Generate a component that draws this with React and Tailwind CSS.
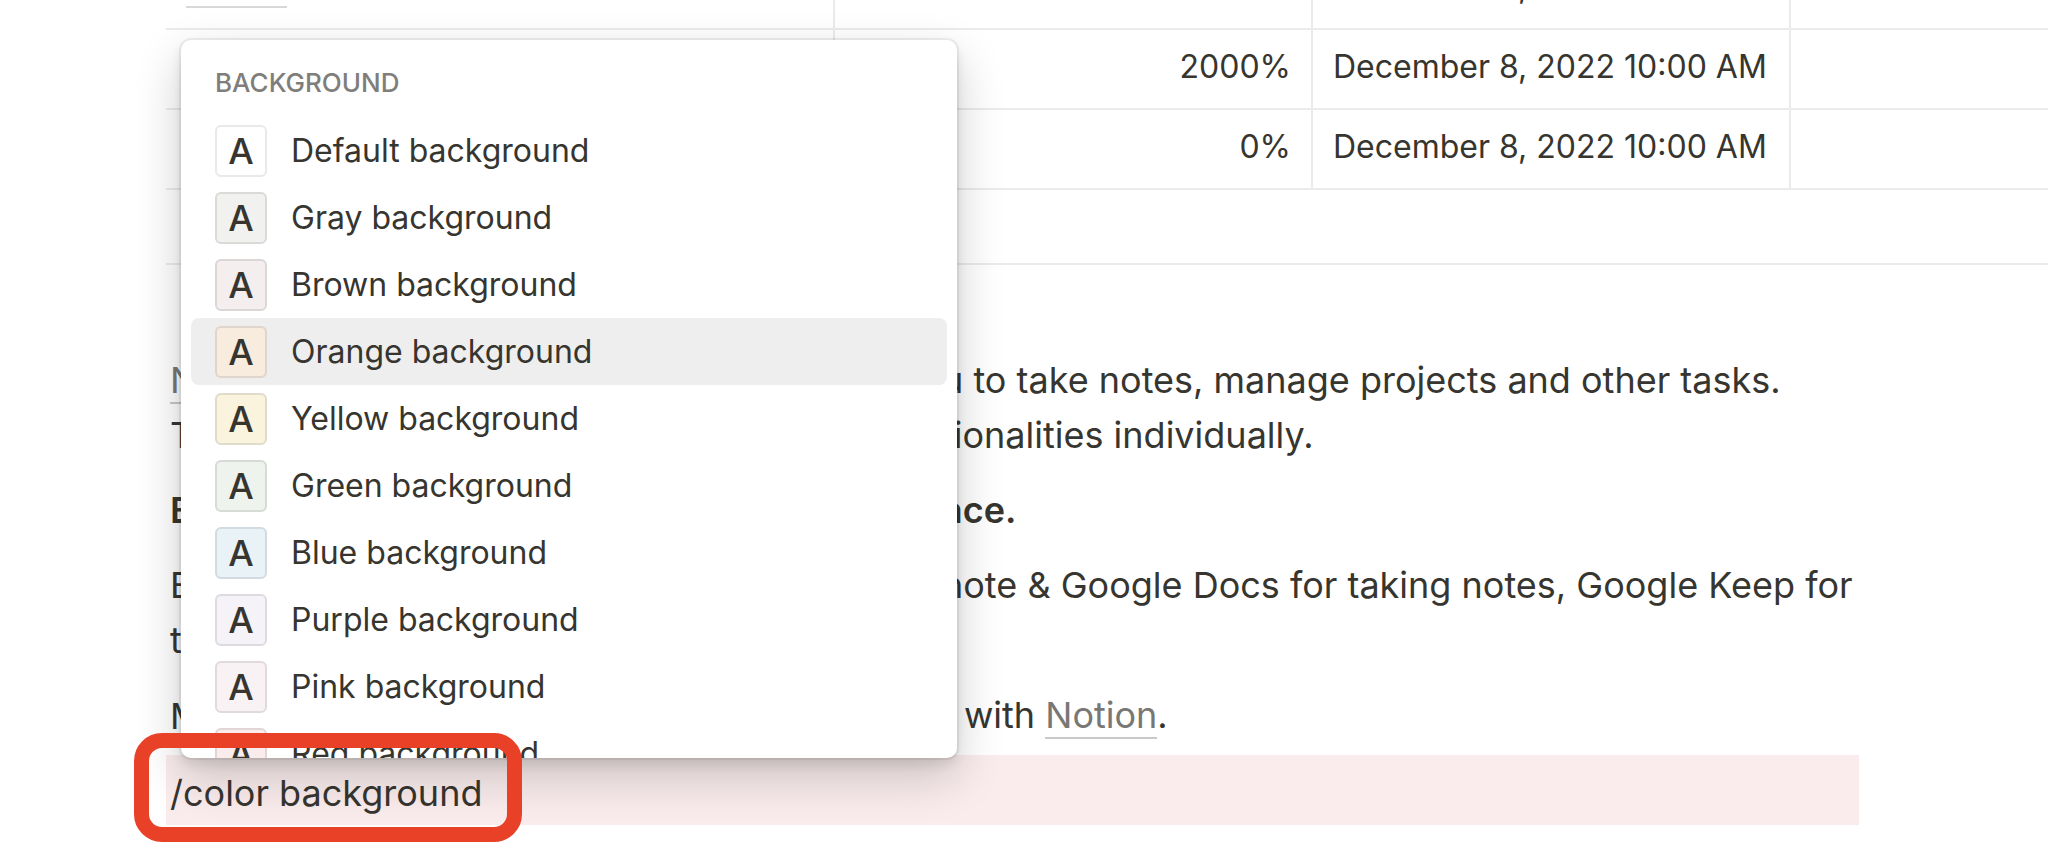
import React from 'react';

const colors = [
  { name: 'Default', swatch: 'bg-white border-[#e9e9e9]' },
  { name: 'Gray', swatch: 'bg-[#f1f1ef] border-[#dadad8]' },
  { name: 'Brown', swatch: 'bg-[#f4eeee] border-[#dcd7d7]' },
  { name: 'Orange', swatch: 'bg-[#f8ecdf] border-[#dfd5cc]', active: true },
  { name: 'Yellow', swatch: 'bg-[#faf3dd] border-[#e1dbc9]' },
  { name: 'Green', swatch: 'bg-[#eef3ed] border-[#d7dbd6]' },
  { name: 'Blue', swatch: 'bg-[#e9f3f7] border-[#d2dbdf]' },
  { name: 'Purple', swatch: 'bg-[#f6f3f8] border-[#dedbe0]' },
  { name: 'Pink', swatch: 'bg-[#f9f2f5] border-[#e0dadd]' },
  { name: 'Red', swatch: 'bg-[#faecec] border-[#e1d5d5]' },
];

const rows = [
  { id: 1, page: 'Notion', progress: '5000%', date: 'December 8, 2022 10:00 AM' },
  { id: 2, page: '', progress: '2000%', date: 'December 8, 2022 10:00 AM' },
  { id: 3, page: '', progress: '0%', date: 'December 8, 2022 10:00 AM' },
];

const DatabaseTable = () => (
  <div className="-mt-[51px] h-[316px] border-b-2 border-[#ebebea]">
    <table className="w-full table-fixed border-collapse text-[32px] leading-[48px]">
      <colgroup>
        <col className="w-[668px]" />
        <col className="w-[478px]" />
        <col className="w-[478px]" />
        <col />
      </colgroup>
      <tbody>
        {rows.map((row) => (
          <tr key={row.id} className="h-[80px] border-b-2 border-[#ebebea]">
            <td className="border-r-2 border-[#ebebea] pb-1 pl-5">
              {row.page && (
                <a href="#page" className="border-b-2 border-[#d8d8d7] font-medium">{row.page}</a>
              )}
            </td>
            <td className="border-r-2 border-[#ebebea] pr-5 pb-1 text-right">{row.progress}</td>
            <td className="border-r-2 border-[#ebebea] pb-1 pl-5 whitespace-nowrap">{row.date}</td>
            <td></td>
          </tr>
        ))}
      </tbody>
    </table>
  </div>
);

// start of a line, running underneath the open menu
const Lead = ({ children }) => (
  <span className="inline-block w-[772px] overflow-hidden align-bottom whitespace-nowrap">{children}</span>
);

const NotionLink = () => (
  <a href="#notion" className="border-b-2 border-[#c9c9c8] text-[#787774]">Notion</a>
);

const ColorMenu = () => (
  <div className="absolute top-[40px] left-[181px] h-[718px] w-[776px] overflow-hidden rounded-[10px] bg-white shadow-[0_0_0_2px_rgba(15,15,15,0.06),0_6px_12px_rgba(15,15,15,0.1),0_18px_48px_rgba(15,15,15,0.2)]">
    <h2 className="px-[34px] pt-[23px] pb-[14px] text-[26px] leading-[40px] font-medium text-[#7f7e7b]">BACKGROUND</h2>
    <div className="px-[10px]">
      {colors.map((color) => (
        <button
          key={color.name}
          type="button"
          className={`flex h-[67px] w-full items-center gap-6 rounded-lg px-6 text-left text-[32px] ${color.active ? 'bg-[#eeeeee]' : ''}`}
        >
          <span className={`flex size-[52px] items-center justify-center rounded-md border-2 text-[36px] font-medium ${color.swatch}`}>A</span>
          {color.name} background
        </button>
      ))}
    </div>
  </div>
);

const App = () => {
  return (
    <div className="relative overflow-hidden bg-white pb-[34px] pl-[166px] font-['Inter',sans-serif] text-[#37352f]">
      <DatabaseTable />

      <div className="mr-[189px] pt-[88px] text-[36px] leading-[55px]">
        <p className="px-1 whitespace-nowrap">
          <Lead><NotionLink /></Lead>
          u to take notes, manage projects and other tasks.
          <br />
          <Lead>There</Lead>
          tionalities individually.
        </p>
        <p className="px-1 pt-5 font-semibold whitespace-nowrap">
          <Lead>But</Lead>
          ace.
        </p>
        <p className="px-1 pt-5 whitespace-nowrap">
          <Lead>Before</Lead>
          note &amp; Google Docs for taking notes, Google Keep for
          <br />
          tasks
        </p>
        <p className="px-1 pt-5 whitespace-nowrap">
          <Lead>Many</Lead>
          t with <NotionLink />.
        </p>
        <p className="mt-[11px] bg-[#faecec] px-1 pt-[10px] pb-1 leading-[56px]">/color background</p>
      </div>

      <ColorMenu />

      {/* highlight ring around the slash command */}
      <div className="pointer-events-none absolute top-[733px] left-[134px] h-[109px] w-[388px] rounded-[28px] border-[15px] border-[#e84127]"></div>
    </div>
  );
};

export default App;
